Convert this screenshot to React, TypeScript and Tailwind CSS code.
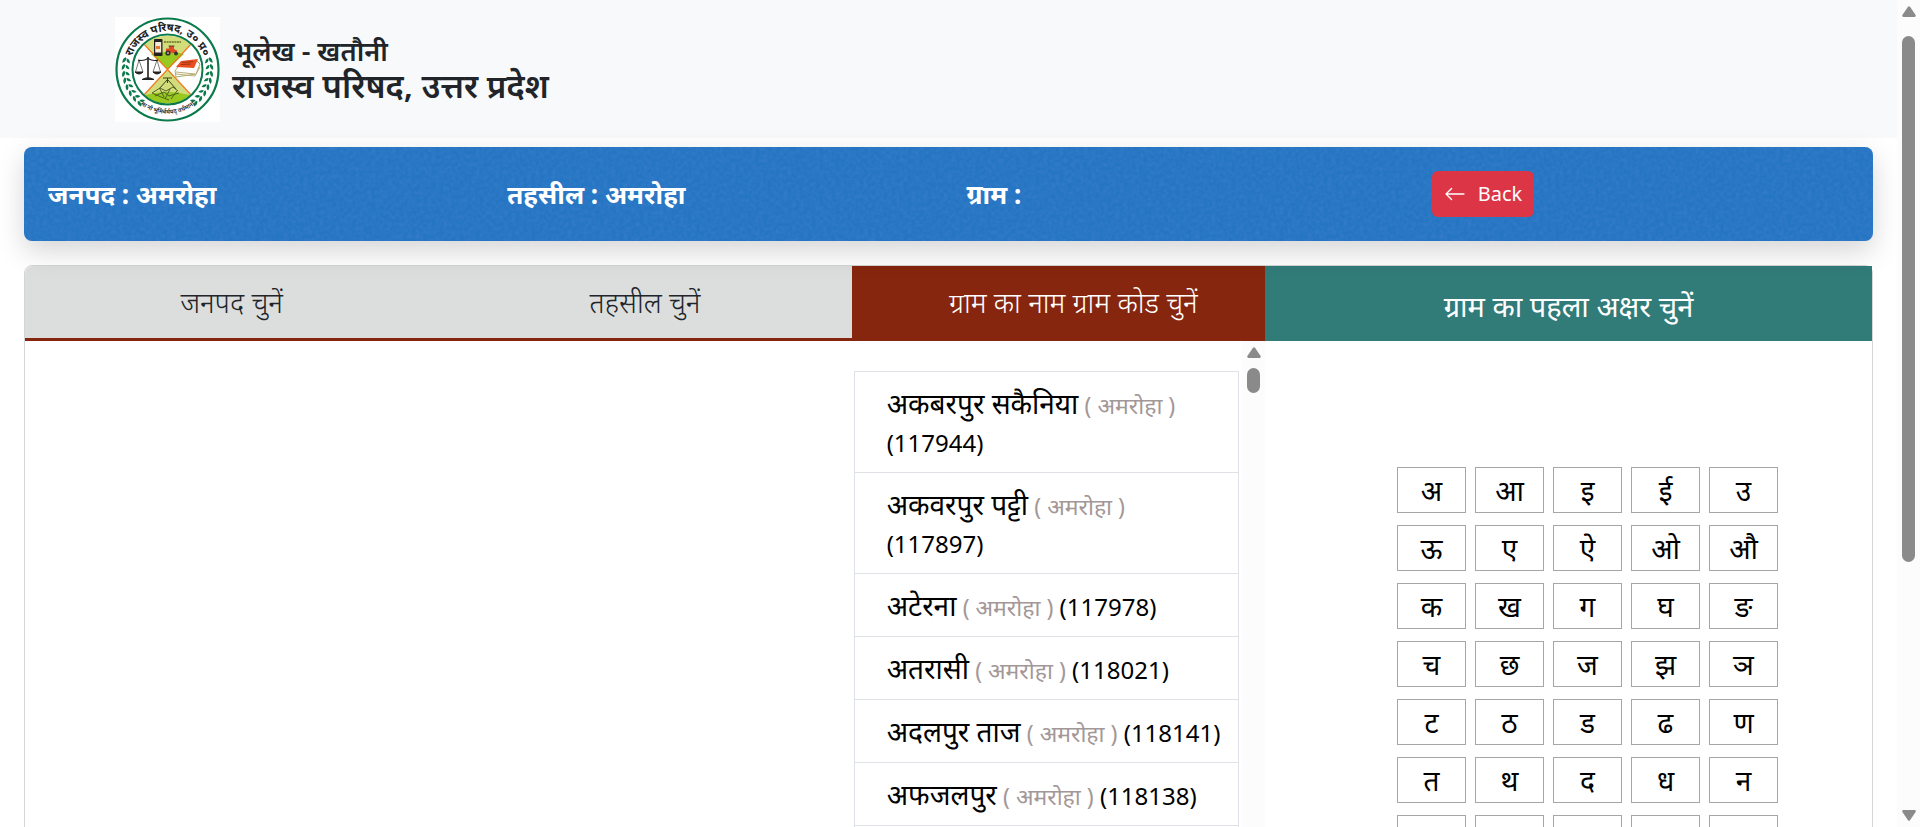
import { BsArrowLeft } from "react-icons/bs";

const villages = [
  { name: "अकबरपुर सकैनिया", pargana: "अमरोहा", code: "117944" },
  { name: "अकवरपुर पट्टी", pargana: "अमरोहा", code: "117897" },
  { name: "अटेरना", pargana: "अमरोहा", code: "117978" },
  { name: "अतरासी", pargana: "अमरोहा", code: "118021" },
  { name: "अदलपुर ताज", pargana: "अमरोहा", code: "118141" },
  { name: "अफजलपुर", pargana: "अमरोहा", code: "118138" },
];

const letters = [
  "अ", "आ", "इ", "ई", "उ",
  "ऊ", "ए", "ऐ", "ओ", "औ",
  "क", "ख", "ग", "घ", "ङ",
  "च", "छ", "ज", "झ", "ञ",
  "ट", "ठ", "ड", "ढ", "ण",
  "त", "थ", "द", "ध", "न",
  "प", "फ", "ब", "भ", "म",
];

const leaves = [-50, -41, -32, -23, -14, -5, 4, 13];

const Logo = () => (
  <svg viewBox="0 0 105 105" className="size-[105px] shrink-0 bg-white" role="img" aria-label="राजस्व परिषद">
    <defs>
      <path id="arc-top" d="M 16.5 40 A 38 38 0 0 1 88.5 40" />
      <path id="arc-bottom" d="M 21.500 84 A 44 44 0 0 0 83.500 84" />
      <clipPath id="inner">
        <circle cx="52.5" cy="52.5" r="34" />
      </clipPath>
    </defs>
    <circle cx="52.5" cy="52.5" r="51" fill="#fff" stroke="#0b7a4b" strokeWidth="2.2" />
    <g clipPath="url(#inner)">
      <path d="M52.5 52.5 22 19 H83 Z" fill="#d3dc7a" />
      <path d="M52.5 52.5 36 37 Q52 33 69 37 Z" fill="#97c91f" />
      <path d="M52.5 52.5 22 86 H83 Z" fill="#d3dc7a" />
      <path d="M28 79 Q52 71 77 79 L83 90 H22 Z" fill="#97c91f" />
      <path d="M27 25 78 80 M78 25 27 80" stroke="#ee7a22" strokeWidth="1.2" />
    </g>
    <circle cx="52.5" cy="52.5" r="35" fill="none" stroke="#0b7a4b" strokeWidth="2" />
    {/* phone and tractor */}
    <rect x="39" y="22" width="8.5" height="17" rx="1" fill="#222" />
    <rect x="40.2" y="25" width="6" height="10.5" fill="#f4ead6" />
    <path d="M41 29h4v3h-4z" fill="#e2762b" />
    <path d="M49 25h17" stroke="#66731f" strokeWidth="1.6" strokeDasharray="2 .6" />
    <path d="M51 35v-3.5h3v-2.500h5v3l3 1.500v3z" fill="#e04a24" />
    <path d="M53.500 29h6" stroke="#333" strokeWidth=".8" />
    <circle cx="53" cy="36" r="2.600" fill="#333" />
    <circle cx="53" cy="36" r="1" fill="#e9a080" />
    <circle cx="61" cy="36.500" r="1.900" fill="#333" />
    {/* scales */}
    <g stroke="#222" fill="none" strokeWidth="1">
      <path d="M33 40v21" strokeWidth="1.600" />
      <path d="M23 43q5 1.500 10-1.500q5 3 10 1.500" strokeWidth="1.200" />
      <path d="M24 43l-3.500 12M24 43l4 12M42 43l-4 12M42 43l3.500 12" strokeWidth=".6" />
      <path d="M20 55h8q-4 4-8 0zM38 55h8q-4 4-8 0zM27 62.500q6-3.500 12 0z" fill="#222" />
    </g>
    {/* books */}
    <path d="M60 54l5-7 17-3 3 3-4 10-20 3z" fill="#fff" stroke="#8a9a3a" strokeWidth=".8" />
    <path d="M61 57l19 2 5-9M61 55l19 2" fill="none" stroke="#bcae79" strokeWidth="1" />
    <path d="M61 50l5-6 17-2-4 9z" fill="#e8501f" />
    <path d="M67 45.500l11-.8M66 47.500l10-.5" stroke="#8f2a12" strokeWidth=".8" />
    {/* survey table and fields */}
    <path d="M48 61h9M52.500 61v5M52 63l-8 9M53 63l8 9" stroke="#38451a" strokeWidth="1" />
    <path d="M37 76l8-5 6 3 7-4 5 4M40 79l9-4 5 4 10-3M45 72l4 8M55 72l-5 10M37 76l9 4 8 3M62 74l-6 8" fill="none" stroke="#536320" strokeWidth="1" />
    {/* leaf garlands */}
    {leaves.map((angle) => (
      <g key={angle} fill="#0b7a4b">
        <g transform={`rotate(${angle} 52.5 52.5)`}>
          <path d="M9 50q-3 2-2 6q3-1 3-5zM10.500 51q3 0 4 4q-4 0-4-3z" />
        </g>
        <g transform={`translate(105 0) scale(-1 1) rotate(${angle} 52.5 52.5)`}>
          <path d="M9 50q-3 2-2 6q3-1 3-5zM10.500 51q3 0 4 4q-4 0-4-3z" />
        </g>
      </g>
    ))}
    <text fontSize="11" fontWeight="700" fill="#222">
      <textPath href="#arc-top" startOffset="50%" textAnchor="middle">राजस्व परिषद, उ० प्र०</textPath>
    </text>
    <text fontSize="6" fontWeight="600" fill="#222">
      <textPath href="#arc-bottom" startOffset="50%" textAnchor="middle">सा नो भूमिर्वर्धयद् वर्धमाना</textPath>
    </text>
  </svg>
);

const Texture = () => (
  <svg className="absolute inset-0 size-full opacity-20" aria-hidden="true">
    <filter id="grain">
      <feTurbulence type="fractalNoise" baseFrequency="0.25" numOctaves="2" seed="4" />
      <feColorMatrix values="0 0 0 0 0.16  0 0 0 0 0.3  0 0 0 0 0.72  1.8 0 0 0 -0.5" />
    </filter>
    <rect width="100%" height="100%" filter="url(#grain)" />
  </svg>
);

const ArrowUp = () => (
  <svg viewBox="0 0 14 11" className="h-[11px] w-3.5" fill="#8a8a8a" aria-hidden="true">
    <path d="M6 .8q1-1.200 2 0l5.600 8.200q.6 1.800-1 2H1.400q-1.600-.2-1-2z" />
  </svg>
);

const App = () => {
  return (
    <div className="flex h-screen overflow-hidden bg-white font-['Noto_Sans','Noto_Sans_Devanagari',sans-serif] text-[#212529]">
      <div className="min-w-0 flex-1 overflow-hidden">
        <header className="flex items-start gap-3 bg-[#f8f9fb] pt-[17px] pb-4 pl-[115px]">
          <Logo />
          <div className="pt-4 font-semibold">
            <p className="text-[27px] leading-9">भूलेख - खतौनी</p>
            <h1 className="text-[33px] leading-[34px]">राजस्व परिषद, उत्तर प्रदेश</h1>
          </div>
        </header>

        <main className="px-6 pt-[9px]">
          <section className="relative rounded-lg bg-[#2475c3] shadow-[0_10px_28px_rgba(0,0,0,0.17)]">
            <div className="absolute inset-0 overflow-hidden rounded-lg">
              <Texture />
            </div>
            <div className="relative grid grid-cols-4 items-center py-6 pl-3 text-[26px] leading-[46px] font-bold text-white">
              <p className="px-3">जनपद : अमरोहा</p>
              <p className="px-3">तहसील : अमरोहा</p>
              <p className="px-3">ग्राम :</p>
              <div className="flex px-3">
                <button className="ml-1.5 flex h-[46px] items-center gap-3 rounded-md bg-[#dc3545] px-3 text-xl font-normal">
                  <BsArrowLeft className="size-[22px]" />
                  Back
                </button>
              </div>
            </div>
          </section>

          <section className="mt-6 grid grid-cols-[1240fr_607fr] rounded-t-lg border border-[#d3d6d6] bg-white">
            <div>
              <div className="grid grid-cols-3 border-b-[3px] border-[#86260f] text-[28px] font-light">
                <button className="h-[72px] rounded-tl-lg bg-[#dcdedd]">जनपद चुनें</button>
                <button className="h-[72px] bg-[#dcdedd]">तहसील चुनें</button>
                <button className="h-[72px] bg-[#86260f] pl-[30px] text-white">ग्राम का नाम ग्राम कोड चुनें</button>
              </div>
              <div className="grid grid-cols-3">
                <div className="col-start-3 flex h-[600px] overflow-hidden">
                  <ul className="mt-[30px] mr-[3px] ml-0.5 min-w-0 flex-1 border border-[#dee2e6] text-black">
                    {villages.map((village) => (
                      <li key={village.code} className="border-b border-[#dee2e6]">
                        <a href="#" className="block pt-3.5 pr-4 pb-2.5 pl-8 text-2xl leading-[38px]">
                          <span className="text-[28px] leading-none">{village.name}</span>{" "}
                          <span className="text-[23px] leading-none text-[#a39797]">( {village.pargana} )</span>{" "}
                          ({village.code})
                        </a>
                      </li>
                    ))}
                  </ul>
                  <div className="flex w-[23px] flex-col items-center gap-2.5 bg-[#fcfcfc] pt-1.5">
                    <ArrowUp />
                    <div className="h-[25px] w-[13px] rounded-full bg-[#8a8a8a]" />
                  </div>
                </div>
              </div>
            </div>

            <div>
              <h2 className="flex h-[75px] items-center justify-center bg-[#317b79] pt-1 text-[29px] text-white">
                ग्राम का पहला अक्षर चुनें
              </h2>
              <div className="flex justify-center pt-[126px] pl-[38px]">
                <div className="grid grid-cols-5 gap-x-[9px] gap-y-3">
                  {letters.map((letter) => (
                    <button key={letter} className="h-[46px] w-[69px] border border-[#a6a6a6] text-[28px] leading-10 text-black">
                      {letter}
                    </button>
                  ))}
                </div>
              </div>
            </div>
          </section>
        </main>
      </div>

      <div className="flex w-[23px] shrink-0 flex-col items-center bg-[#fcfcfc] py-1.5">
        <ArrowUp />
        <div className="mt-[19px] mb-auto h-[64.5%] w-[13px] rounded-full bg-[#8a8a8a]" />
        <div className="rotate-180">
          <ArrowUp />
        </div>
      </div>
    </div>
  );
};

export default App;
